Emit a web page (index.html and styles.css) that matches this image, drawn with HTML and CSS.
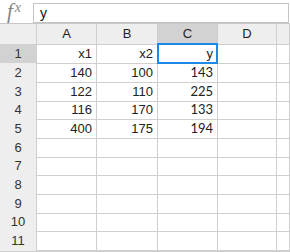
FILE: index.html
```html
<!DOCTYPE html>
<html>
<head>
    <title>Sheet</title>
    <link rel="stylesheet" href="styles.css">
</head>
<body>
    <div class="formula-bar">
        <div class="fx">f<sup>x</sup></div>
        <div class="formula-input">y</div>
    </div>

    <div class="sheet">
        <div class="row head-row">
            <div class="corner"></div>
            <div class="col-head">A</div>
            <div class="col-head">B</div>
            <div class="col-head active">C</div>
            <div class="col-head">D</div>
            <div class="col-head"></div>
        </div>
        <div class="row r19">
            <div class="row-head active">1</div>
            <div class="cell">x1</div>
            <div class="cell">x2</div>
            <div class="cell selected">y</div>
            <div class="cell"></div>
            <div class="cell"></div>
        </div>
        <div class="row r19">
            <div class="row-head">2</div>
            <div class="cell">140</div>
            <div class="cell">100</div>
            <div class="cell small">143</div>
            <div class="cell"></div>
            <div class="cell"></div>
        </div>
        <div class="row r18">
            <div class="row-head">3</div>
            <div class="cell">122</div>
            <div class="cell">110</div>
            <div class="cell small">225</div>
            <div class="cell"></div>
            <div class="cell"></div>
        </div>
        <div class="row r19">
            <div class="row-head">4</div>
            <div class="cell">116</div>
            <div class="cell">170</div>
            <div class="cell small">133</div>
            <div class="cell"></div>
            <div class="cell"></div>
        </div>
        <div class="row r19">
            <div class="row-head">5</div>
            <div class="cell">400</div>
            <div class="cell">175</div>
            <div class="cell small">194</div>
            <div class="cell"></div>
            <div class="cell"></div>
        </div>
        <div class="row r18">
            <div class="row-head">6</div>
            <div class="cell"></div><div class="cell"></div><div class="cell"></div><div class="cell"></div><div class="cell"></div>
        </div>
        <div class="row r19">
            <div class="row-head">7</div>
            <div class="cell"></div><div class="cell"></div><div class="cell"></div><div class="cell"></div><div class="cell"></div>
        </div>
        <div class="row r19">
            <div class="row-head">8</div>
            <div class="cell"></div><div class="cell"></div><div class="cell"></div><div class="cell"></div><div class="cell"></div>
        </div>
        <div class="row r18">
            <div class="row-head">9</div>
            <div class="cell"></div><div class="cell"></div><div class="cell"></div><div class="cell"></div><div class="cell"></div>
        </div>
        <div class="row r19">
            <div class="row-head">10</div>
            <div class="cell"></div><div class="cell"></div><div class="cell"></div><div class="cell"></div><div class="cell"></div>
        </div>
        <div class="row r19">
            <div class="row-head">11</div>
            <div class="cell"></div><div class="cell"></div><div class="cell"></div><div class="cell"></div><div class="cell"></div>
        </div>
        <div class="row r2">
            <div class="row-head"></div>
            <div class="cell"></div><div class="cell"></div><div class="cell"></div><div class="cell"></div><div class="cell"></div>
        </div>
    </div>
</body>
</html>
```

FILE: styles.css
```css
body {
    margin: 0;
    padding: 0;
    background-color: #fff;
    font-family: "Liberation Sans", Arial, sans-serif;
    color: #222;
}

.formula-bar {
    display: flex;
    align-items: flex-start;
    height: 23px;
    box-sizing: border-box;
    padding: 3px 1px 1px 0;
}

.fx {
    width: 33px;
    height: 23px;
    margin-top: -3px;
    padding-left: 7px;
    box-sizing: border-box;
    font-family: "Liberation Serif", serif;
    font-style: italic;
    font-size: 21px;
    color: #858585;
    line-height: 23px;
    white-space: nowrap;
}

.fx sup {
    font-size: 14px;
    line-height: 0;
    vertical-align: 6px;
    margin-left: 2px;
}

.formula-input {
    flex: 1;
    height: 20px;
    box-sizing: border-box;
    border: 1px solid #c4c4c4;
    padding: 1px 6px;
    font-size: 14px;
    line-height: 17px;
    color: #111;
}

.sheet {
    border-top: 1px solid #c8c8c8;
    overflow: hidden;
}

.row {
    display: grid;
    grid-template-columns: 37px 60px 61px 60px 59px 13px;
}

.r19 { height: 19px; }
.r18 { height: 18px; }
.r2 { height: 2px; }

.head-row {
    height: 20px;
}

.corner,
.col-head,
.row-head {
    background-color: #eeeeee;
    border-right: 1px solid #cfcfcf;
    border-bottom: 1px solid #cfcfcf;
    box-sizing: border-box;
    font-size: 13px;
    color: #222;
    text-align: center;
}

.col-head {
    line-height: 20px;
}

.row-head {
    line-height: 19px;
    color: #333;
}

.col-head.active,
.row-head.active {
    background-color: #d2d2d2;
}

.cell {
    border-right: 1px solid #cfcfcf;
    border-bottom: 1px solid #cfcfcf;
    box-sizing: border-box;
    text-align: right;
    padding-right: 4px;
    font-size: 13px;
    line-height: 19px;
}

.cell.small {
    font-family: Lato, "Liberation Sans", sans-serif;
    font-size: 13px;
    padding-right: 4px;
}

.cell.selected {
    position: relative;
    border: 2px solid #1e88e5;
    margin: -1px 0 0 -1px;
    height: 21px;
    line-height: 18px;
    padding-right: 3px;
}
```
